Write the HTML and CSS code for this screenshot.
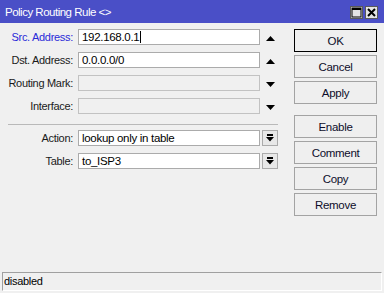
FILE: index.html
```html
<!DOCTYPE html>
<html>
<head>
<meta charset="utf-8">
<link rel="stylesheet" href="styles.css">
</head>
<body>
<div class="window">
  <div class="titlebar">
    <span class="title">Policy Routing Rule &lt;&gt;</span>
    <div class="tb-btns">
      <span class="tb-btn"><svg width="11" height="11" viewBox="0 0 11 11"><rect x="1" y="1" width="9" height="9" fill="none" stroke="#000" stroke-width="1"/><rect x="1" y="1" width="9" height="2" fill="#000"/></svg></span>
      <span class="tb-btn"><svg width="11" height="11" viewBox="0 0 11 11"><path d="M2 2 L9 9 M9 2 L2 9" stroke="#000" stroke-width="2"/></svg></span>
    </div>
  </div>
  <div class="content">
    <div class="form">
      <div class="row">
        <span class="lbl active">Src. Address:</span>
        <div class="field">192.168.0.1<span class="caret"></span></div>
        <span class="arrow"><svg width="9" height="5" viewBox="0 0 9 5"><polygon points="0,5 4.5,0 9,5" fill="#000"/></svg></span>
      </div>
      <div class="row">
        <span class="lbl">Dst. Address:</span>
        <div class="field">0.0.0.0/0</div>
        <span class="arrow"><svg width="9" height="5" viewBox="0 0 9 5"><polygon points="0,5 4.5,0 9,5" fill="#000"/></svg></span>
      </div>
      <div class="row">
        <span class="lbl">Routing Mark:</span>
        <div class="field disabled"></div>
        <span class="arrow"><svg width="9" height="5" viewBox="0 0 9 5"><polygon points="0,0 9,0 4.5,5" fill="#000"/></svg></span>
      </div>
      <div class="row last">
        <span class="lbl">Interface:</span>
        <div class="field disabled"></div>
        <span class="arrow"><svg width="9" height="5" viewBox="0 0 9 5"><polygon points="0,0 9,0 4.5,5" fill="#000"/></svg></span>
      </div>
      <div class="sep"></div>
      <div class="row">
        <span class="lbl">Action:</span>
        <div class="field">lookup only in table</div>
        <span class="dd"><svg width="8" height="8" viewBox="0 0 8 8"><rect x="1" y="0" width="6" height="2" fill="#000"/><polygon points="0,3 8,3 4,7.5" fill="#000"/></svg></span>
      </div>
      <div class="row">
        <span class="lbl">Table:</span>
        <div class="field">to_ISP3</div>
        <span class="dd"><svg width="8" height="8" viewBox="0 0 8 8"><rect x="1" y="0" width="6" height="2" fill="#000"/><polygon points="0,3 8,3 4,7.5" fill="#000"/></svg></span>
      </div>
    </div>
    <div class="buttons">
      <div class="btn default">OK</div>
      <div class="btn">Cancel</div>
      <div class="btn">Apply</div>
      <div class="btn spaced">Enable</div>
      <div class="btn">Comment</div>
      <div class="btn">Copy</div>
      <div class="btn">Remove</div>
    </div>
  </div>
  <div class="status"><div class="status-field">disabled</div></div>
</div>
</body>
</html>
```

FILE: styles.css
```css
html, body {
  margin: 0;
  padding: 0;
}
body {
  width: 384px;
  height: 293px;
  overflow: hidden;
  background: #f0f0f0;
  font-family: "Liberation Sans", Arial, sans-serif;
  font-size: 11px;
  letter-spacing: -0.3px;
  color: #000;
}
.window {
  width: 384px;
  height: 293px;
  display: flex;
  flex-direction: column;
}
.titlebar {
  height: 23px;
  flex: none;
  background: #4a4fc7;
  display: flex;
  align-items: center;
  justify-content: space-between;
  padding: 0 6px 0 5px;
  box-sizing: border-box;
}
.title {
  color: #fff;
  font-size: 11.5px;
  letter-spacing: -0.5px;
}
.tb-btns {
  display: flex;
  gap: 2px;
  margin-top: 2px;
}
.tb-btn {
  width: 13px;
  height: 13px;
  box-sizing: border-box;
  background: #e4e4e4;
  border: 1px solid #5a5a5a;
  display: flex;
  align-items: center;
  justify-content: center;
}
.tb-btn svg { display: block; }
.content {
  flex: 1;
  display: flex;
  padding-top: 6px;
}
.form {
  width: 278px;
  flex: none;
}
.row {
  display: flex;
  align-items: center;
  height: 16px;
  margin-bottom: 7px;
}
.row.last { margin-bottom: 0; }
.lbl {
  width: 73px;
  text-align: right;
  margin-right: 5px;
  white-space: nowrap;
  color: #1a1a1a;
}
.lbl.active { color: #2a2ad8; }
.field {
  width: 182px;
  height: 16px;
  box-sizing: border-box;
  border: 1px solid #ababab;
  background: #fff;
  padding-left: 3px;
  line-height: 14px;
  white-space: nowrap;
  display: flex;
  align-items: center;
  font-size: 11.5px;
}
.field.disabled {
  background: #f0f0f0;
  border-color: #c2c2c2;
}
.caret {
  display: inline-block;
  width: 1px;
  height: 12px;
  background: #000;
  margin-left: 1px;
}
.arrow {
  width: 16px;
  margin-left: 2px;
  display: flex;
  justify-content: center;
  padding-top: 2px;
}
.arrow svg, .dd svg { display: block; }
.dd {
  width: 16px;
  height: 16px;
  box-sizing: border-box;
  margin-left: 2px;
  border: 1px solid #ababab;
  background: #e8e8e8;
  display: flex;
  align-items: center;
  justify-content: center;
}
.sep {
  margin: 10px 0 5px 8px;
  width: 270px;
  height: 1px;
  background: #b9b9b9;
}
.buttons {
  margin-left: 16px;
  display: flex;
  flex-direction: column;
  gap: 3px;
}
.btn {
  width: 83px;
  height: 23px;
  box-sizing: border-box;
  border: 1px solid #a3a3a3;
  background: #efefef;
  display: flex;
  align-items: center;
  justify-content: center;
  color: #0d0d2a;
  font-size: 11.5px;
}
.btn.default { border-color: #000; }
.btn.spaced { margin-top: 8px; }
.status {
  flex: none;
  padding: 0 2px 2px 2px;
}
.status-field {
  height: 19px;
  box-sizing: border-box;
  border-top: 1px solid #a0a0a0;
  border-left: 1px solid #a0a0a0;
  border-right: 1px solid #fff;
  border-bottom: 1px solid #fff;
  padding-left: 1px;
  line-height: 17px;
}
```
